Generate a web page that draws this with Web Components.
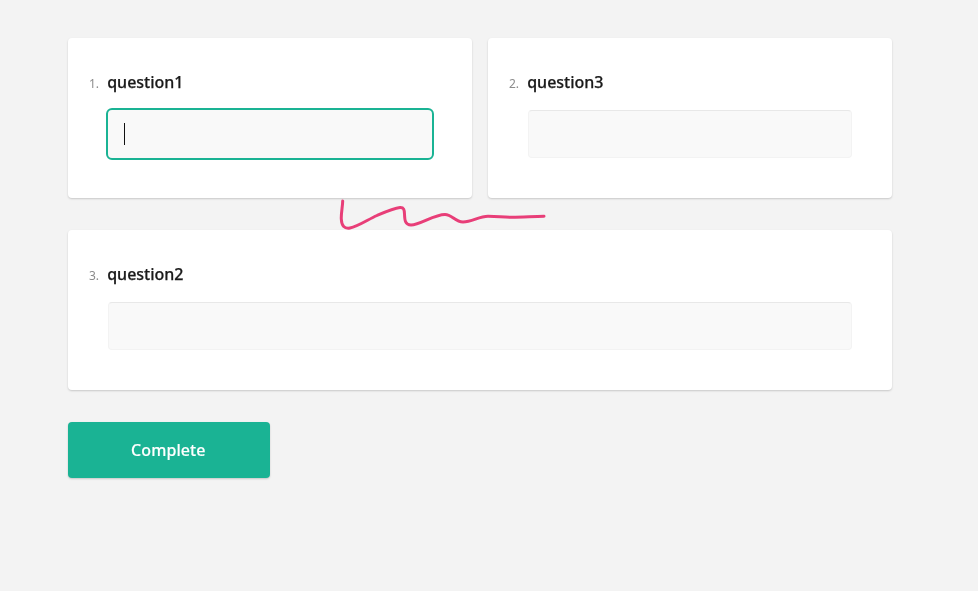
<!DOCTYPE html>
<html lang="en">
<head>
<meta charset="utf-8">
<title>Survey</title>
<style>
  html, body { margin: 0; height: 100%; }
  body { background: #f3f3f3; font-family: "Noto Sans", "Open Sans", sans-serif; }
</style>
</head>
<body>
<survey-page>
  <survey-question number="1" label="question1" focused></survey-question>
  <survey-question number="2" label="question3"></survey-question>
  <survey-question number="3" label="question2" wide></survey-question>
  <complete-button slot="actions">Complete</complete-button>
</survey-page>

<script>
class SurveyPage extends HTMLElement {
  constructor() {
    super();
    this.attachShadow({ mode: "open" });
  }

  connectedCallback() {
    this.shadowRoot.innerHTML = `
      <style>
        :host {
          display: block;
          position: relative;
          box-sizing: border-box;
          width: 978px;
          height: 591px;
          padding: 38px 86px 0 68px;
        }
        .grid {
          display: grid;
          grid-template-columns: 1fr 1fr;
          column-gap: 16px;
          row-gap: 32px;
        }
        .actions { margin-top: 32px; }
        svg {
          position: absolute;
          left: 0;
          top: 0;
          pointer-events: none;
        }
      </style>
      <div class="grid"><slot></slot></div>
      <div class="actions"><slot name="actions"></slot></div>
      <svg width="978" height="591" viewBox="0 0 978 591" fill="none">
        <!-- freehand mark between the rows -->
        <path d="M342.7 201 C342.6 207 341 213 341.3 219 C341.6 226 344.5 229 350 228 C358 226.5 368 219.5 377 215.5 C385 212 394 208 400 207.5 C404 207.3 404.3 210 404.5 214 C404.7 220 405 225 411 225 C420 225 434 214.5 445 214.5 C452 214.5 455 222 463 222 C472 222 479 216.3 488 216.3 C497 216.3 503 217.2 512 217.2 C523 217.2 533 216.4 544 216.3"
          stroke="#e83e78" stroke-width="3" stroke-linecap="round" stroke-linejoin="round"/>
      </svg>
    `;
  }
}

class SurveyQuestion extends HTMLElement {
  constructor() {
    super();
    this.attachShadow({ mode: "open" });
  }

  connectedCallback() {
    const number = this.getAttribute("number");
    const label = this.getAttribute("label");
    const focused = this.hasAttribute("focused");

    this.shadowRoot.innerHTML = `
      <style>
        :host {
          display: block;
          box-sizing: border-box;
          height: 160px;
          padding: 32px 40px 0 21px;
          background: #fff;
          border-radius: 4px;
          box-shadow: 0 1px 2px rgba(0, 0, 0, 0.18);
        }
        :host([wide]) { grid-column: 1 / -1; }
        .title {
          display: flex;
          align-items: baseline;
          height: 24px;
          line-height: 24px;
          will-change: transform; /* greyscale text */
        }
        .num {
          width: 18.2px;
          font-size: 12px;
          color: #8c8c8c;
        }
        .label {
          font-size: 16px;
          font-weight: 500;
          color: #1a1a1a;
          -webkit-text-stroke: 0.25px #1a1a1a;
        }
        .field {
          position: relative;
          box-sizing: border-box;
          height: 48px;
          margin: 16px 0 0 19px;
          background: #f9f9f9;
          border: 1px solid #f3f3f3;
          border-top-color: #e8e8e8;
          border-radius: 4px;
        }
        .field.focused {
          border: 2px solid #1ab394;
          margin: 14px -2px -2px 17px;
          height: 52px;
          border-radius: 6px;
        }
        .caret {
          position: absolute;
          left: 16px;
          top: 13px;
          width: 1px;
          height: 22px;
          background: #111;
        }
      </style>
      <div class="title"><span class="num">${number}.</span><span class="label">${label}</span></div>
      <div class="field ${focused ? "focused" : ""}">${focused ? '<span class="caret"></span>' : ""}</div>
    `;
  }
}

class CompleteButton extends HTMLElement {
  constructor() {
    super();
    this.attachShadow({ mode: "open" });
  }

  connectedCallback() {
    this.shadowRoot.innerHTML = `
      <style>
        :host {
          display: flex;
          align-items: center;
          justify-content: center;
          box-sizing: border-box;
          width: 202px;
          height: 56px;
          padding-right: 1.5px;
          background: #1ab394;
          border-radius: 4px;
          box-shadow: 0 1px 2px rgba(0, 0, 0, 0.18);
          color: #fff;
          font-size: 16px;
          font-weight: 500;
          letter-spacing: 0.1px;
        }
        span {
          will-change: transform;
          -webkit-text-stroke: 0.15px #fff;
        }
      </style>
      <span><slot></slot></span>
    `;
  }
}

customElements.define("survey-page", SurveyPage);
customElements.define("survey-question", SurveyQuestion);
customElements.define("complete-button", CompleteButton);
</script>
</body>
</html>
